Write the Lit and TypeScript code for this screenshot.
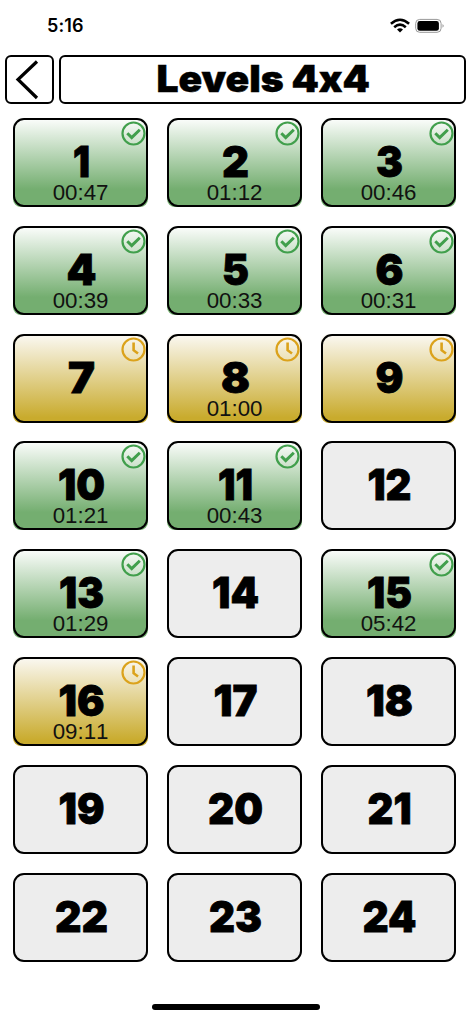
import { LitElement, html, svg, css, nothing } from "lit";
import { customElement, property } from "lit/decorators.js";
import { classMap } from "lit/directives/class-map.js";

type Status = "done" | "open" | "none";
interface Level { n: number; status: Status; time?: string; }

const progress: Record<number, [Status, string?]> = {
  1: ["done", "00:47"], 2: ["done", "01:12"], 3: ["done", "00:46"],
  4: ["done", "00:39"], 5: ["done", "00:33"], 6: ["done", "00:31"],
  7: ["open"], 8: ["open", "01:00"], 9: ["open"],
  10: ["done", "01:21"], 11: ["done", "00:43"],
  13: ["done", "01:29"], 15: ["done", "05:42"], 16: ["open", "09:11"],
};

const levels: Level[] = Array.from({ length: 24 }, (_, i) => {
  const [status, time] = progress[i + 1] ?? ["none"];
  return { n: i + 1, status: status as Status, time };
});

// Rendered widths of the numerals, which are set wider or tighter per pair.
const widths: Record<number, number> = {
  1: 17, 2: 27, 3: 27, 4: 30, 5: 27, 6: 28, 7: 27, 8: 29, 9: 28,
  10: 47, 11: 35, 12: 44, 13: 45, 14: 47, 15: 45, 16: 46, 17: 44, 18: 47,
  19: 46, 20: 55, 21: 44, 22: 53, 23: 53, 24: 54,
};

@customElement("level-card")
class LevelCard extends LitElement {
  @property({ attribute: false }) level!: Level;

  static styles = css`
    :host { display: block; }
    .card {
      position: relative; box-sizing: border-box; height: 100%;
      border-radius: 11px; background: #ededed;
      display: flex; flex-direction: column; align-items: center; padding-top: 20px;
    }
    .card::after {
      content: ""; position: absolute; inset: 0; box-sizing: border-box;
      border: 2px solid #000; border-radius: 11px;
    }
    .done, .open { border-radius: 8px; }
    .done { background: linear-gradient(#fdfefd 0%, #74ae70 80%, #74ae70 100%); }
    .open { background: linear-gradient(#fbf9f4 0%, #c9ab2d 94%); }
    .num { display: block; height: 48px; width: 80px; overflow: visible; flex: none; }
    .num text { font: 900 42.5px Inter, sans-serif; stroke: #000; stroke-width: .8px; }
    .time { font: 22.3px/24px "Liberation Sans", Arial, sans-serif; font-kerning: none; color: #111; margin-top: -5px; }
    .badge { position: absolute; right: 2.2px; top: 3px; width: 25px; height: 25px; fill: none; }
    .done .badge { stroke: #419f4c; }
    .open .badge { stroke: #dba21b; }
  `;

  render() {
    const { n, status, time } = this.level;
    const w = widths[n];
    return html`
      <div class=${classMap({ card: true, done: status === "done", open: status === "open" })}>
        ${status !== "none" ? html`
          <svg class="badge" viewBox="0 0 25 25">
            <circle cx="12.5" cy="12.5" r="11" stroke-width="2.2"></circle>
            ${status === "done"
              ? svg`<path d="M6.3 12.3L10.7 16.6L18.8 8.7" stroke-width="3"></path>`
              : svg`<path d="M12.6 5.5V13.2L17 16.5" stroke-width="2.6"></path>`}
          </svg>` : nothing}
        <svg class="num" viewBox="0 0 80 48">
          <text x=${40.5 - w / 2} y="38.8" textLength=${w} lengthAdjust="spacingAndGlyphs">${n}</text>
        </svg>
        ${time ? html`<span class="time">${time}</span>` : nothing}
      </div>`;
  }
}

@customElement("app-root")
class AppRoot extends LitElement {
  static styles = css`
    :host { display: block; }
    .screen {
      box-sizing: border-box; width: 471px; height: 1019px; background: #fff; overflow: hidden;
      display: flex; flex-direction: column; color: #000;
    }
    .status { height: 55px; flex: none; box-sizing: border-box; padding: 14px 26px 0 47px; display: flex; justify-content: space-between; }
    .clock { font: 600 18px/24px Inter, sans-serif; letter-spacing: .1px; }
    .status svg { width: 56px; height: 24px; }
    .bar { display: flex; gap: 5px; padding: 0 5px; height: 49px; flex: none; }
    .back, .title { box-sizing: border-box; border: 2px solid #000; border-radius: 6px; background: #fff; }
    .back { width: 49px; padding: 0; }
    .back svg { display: block; width: 45px; height: 45px; fill: none; stroke: #000; stroke-width: 3.2; }
    .title { flex: 1; margin: 0; display: flex; justify-content: center; }
    .title svg { width: 240px; height: 45px; }
    .title text { font: 900 36.5px Inter, sans-serif; font-feature-settings: "calt" 0; stroke: #000; stroke-width: .5px; }
    .grid {
      display: grid; grid-template-columns: repeat(3, 135.2px); grid-auto-rows: 89px;
      gap: 18.83px 18.8px; padding: 14px 0 0 13px; flex: 1; align-content: start;
    }
    .home { width: 168px; height: 6px; border-radius: 3px; background: #000; margin: 0 auto 9px; flex: none; }
  `;

  render() {
    return html`
      <div class="screen">
        <div class="status">
          <span class="clock">5:16</span>
          <svg viewBox="0 0 56 24">
            <g fill="none" stroke="#000" stroke-width="2.5">
              <path d="M1.9 9.8Q11 1.8 20.1 9.8"></path>
              <path d="M5.2 13.2Q11 8 16.8 13.2"></path>
            </g>
            <path d="M8 15.5Q11 13.1 14 15.5L11 18.5Z"></path>
            <rect x="26.7" y="5.4" width="25.4" height="12.9" rx="4" fill="none" stroke="#999" stroke-width="1"></rect>
            <rect x="28.4" y="7" width="21.5" height="9.8" rx="2.4"></rect>
            <path d="M53.5 10Q56 11.8 53.5 13.8Z" fill="#999"></path>
          </svg>
        </div>
        <div class="bar">
          <button class="back" aria-label="Back">
            <svg viewBox="0 0 45 45"><path d="M30 4.5L11 22.5L30 41"></path></svg>
          </button>
          <h1 class="title">
            <svg viewBox="0 0 240 45">
              <text x="13.5" y="35.3" textLength="213.5" lengthAdjust="spacingAndGlyphs">Levels 4x4</text>
            </svg>
          </h1>
        </div>
        <div class="grid">${levels.map((l) => html`<level-card .level=${l}></level-card>`)}</div>
        <div class="home"></div>
      </div>`;
  }
}
